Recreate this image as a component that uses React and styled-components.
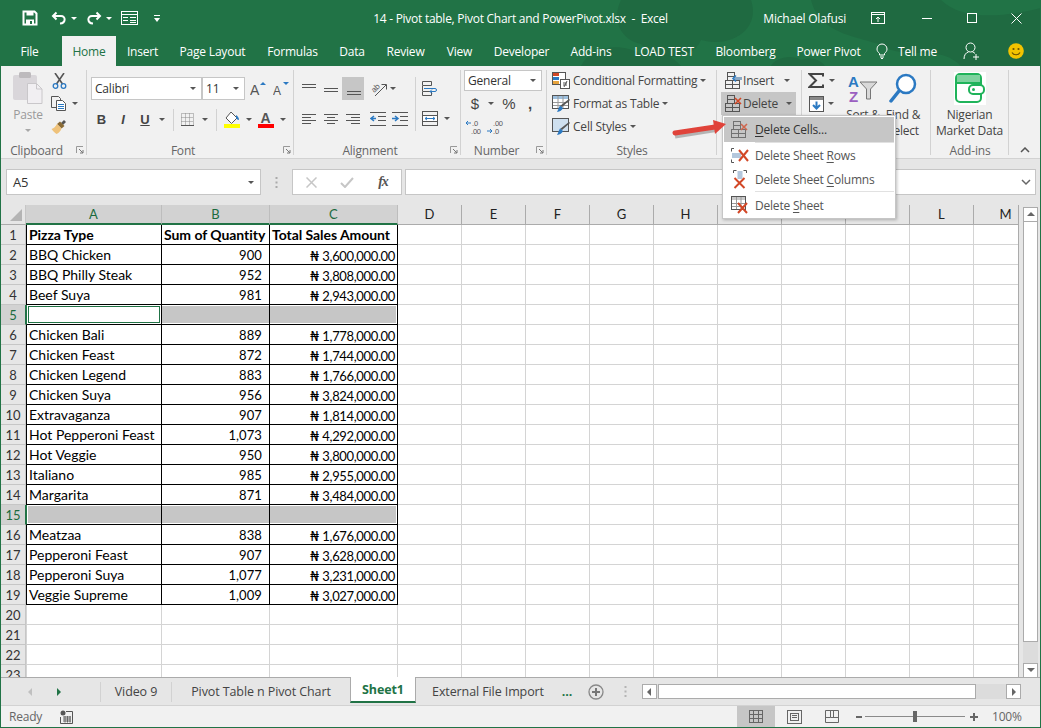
import React from "react";
import styled, { createGlobalStyle } from "styled-components";

const GREEN = "#217346";
const UI = `"Open Sans", "Noto Sans", sans-serif`;
const SHEET = `Lato, "Noto Sans", "DejaVu Sans", sans-serif`;

const Global = createGlobalStyle`
  html, body { margin: 0; padding: 0; background: #fff; }
  * { box-sizing: border-box; }
  svg { display: block; }
`;

const Window = styled.div`
  width: 1041px;
  height: 728px;
  border: 1px solid ${GREEN};
  border-top: 0;
  display: flex;
  flex-direction: column;
  overflow: hidden;
  position: relative;
  font-family: ${UI};
  font-size: 12px;
  letter-spacing: -0.2px;
  color: #444;
`;

/* ---------- title + tabs ---------- */
const Header = styled.header`
  position: relative;
  background: ${GREEN};
  color: #fff;
  height: 66px;
  flex: none;
  margin: 0 -1px;
`;
const Pattern = styled.svg`
  position: absolute;
  top: 0;
  right: 0;
  pointer-events: none;
`;
const TitleBar = styled.div`
  position: relative;
  height: 36px;
  display: grid;
  grid-template-columns: 1fr auto 1fr;
  align-items: center;
`;
const Qat = styled.div`
  display: flex;
  align-items: center;
  padding-left: 20px;
`;
const Slot = styled.div`
  width: ${(p) => p.$w}px;
  height: ${(p) => p.$h || 22}px;
  margin-left: ${(p) => p.$ml || 0}px;
  flex: none;
  display: flex;
  align-items: center;
  justify-content: center;
  background: ${(p) => (p.$on ? "#c6c6c6" : "transparent")};
`;
const Title = styled.div`
  white-space: pre;
  letter-spacing: -0.27px;
`;
const WinControls = styled.div`
  display: flex;
  align-items: center;
  justify-content: flex-end;
  padding-right: 2px;
`;
const UserName = styled.span`
  margin-right: 14px;
`;
const TabRow = styled.nav`
  position: relative;
  height: 30px;
  display: flex;
  align-items: stretch;
`;
const Tab = styled.div`
  width: ${(p) => p.$w}px;
  margin-left: ${(p) => p.$ml || 0}px;
  flex: none;
  display: flex;
  align-items: center;
  justify-content: center;
  white-space: nowrap;
  background: ${(p) => (p.$active ? "#f1f1f1" : "transparent")};
  color: ${(p) => (p.$active ? GREEN : "#fff")};
`;

/* ---------- ribbon ---------- */
const Ribbon = styled.section`
  height: 93px;
  flex: none;
  display: flex;
  background: #f1f1f1;
  border-bottom: 1px solid #d2d2d2;
`;
const Group = styled.div`
  width: ${(p) => p.$w}px;
  flex: none;
  display: flex;
  flex-direction: column;
  position: relative;
  &::after {
    content: "";
    position: absolute;
    right: 0;
    top: 4px;
    bottom: 3px;
    width: 1px;
    background: #d2d2d2;
  }
`;
const Body = styled.div`
  flex: 1;
  display: flex;
  min-height: 0;
  padding: ${(p) => p.$pt ?? 3}px 0 0 ${(p) => p.$pl ?? 0}px;
`;
const GroupLabel = styled.div`
  height: 16px;
  display: flex;
  align-items: center;
  color: #666;
  span { flex: 1; text-align: center; }
`;
const Launcher = styled.div`
  width: 15px;
  flex: none;
  display: flex;
  justify-content: center;
`;
const Col = styled.div`
  display: flex;
  flex-direction: column;
  margin-left: ${(p) => p.$ml || 0}px;
  width: ${(p) => (p.$w ? `${p.$w}px` : "auto")};
`;
const WideRow = styled.div`
  display: flex;
  align-items: center;
  height: ${(p) => p.$h}px;
  margin-bottom: ${(p) => p.$mb || 0}px;
`;
const BigButton = styled.div`
  width: ${(p) => p.$w}px;
  flex: none;
  display: flex;
  flex-direction: column;
  align-items: center;
  margin-left: ${(p) => p.$ml || 0}px;
  padding-top: 3px;
  color: ${(p) => (p.$muted ? "#9a9a9a" : "#444")};
`;
const BigIcon = styled.div`
  height: 32px;
  display: flex;
  align-items: center;
`;
const BigText = styled.div`
  line-height: 16px;
  margin-top: 3px;
  text-align: center;
  white-space: nowrap;
`;
const Caret = styled.i`
  display: block;
  flex: none;
  width: 0;
  height: 0;
  border: 3px solid transparent;
  border-top: 3px solid ${(p) => p.$c || "#555"};
  border-bottom: 0;
  margin: ${(p) => p.$m || "0"};
`;
const Select = styled.div`
  width: ${(p) => p.$w}px;
  height: ${(p) => p.$h || 23}px;
  margin-left: ${(p) => p.$ml || 0}px;
  flex: none;
  background: #fff;
  border: 1px solid #c6c6c6;
  display: flex;
  align-items: center;
  justify-content: space-between;
  padding: 0 5px 0 3px;
  color: #333;
`;
const VLine = styled.div`
  width: 1px;
  height: ${(p) => p.$h || 22}px;
  background: #d2d2d2;
  margin: 0 ${(p) => p.$mr ?? 4}px 0 ${(p) => p.$ml ?? 4}px;
  flex: none;
`;
const StyleRow = styled.div`
  height: 23px;
  display: flex;
  align-items: center;
  white-space: nowrap;
  width: ${(p) => (p.$w ? `${p.$w}px` : "auto")};
  background: ${(p) => (p.$on ? "#c6c6c6" : "transparent")};
  padding-left: ${(p) => p.$pl || 0}px;
`;
const RowText = styled.span`
  margin: 0 ${(p) => p.$mr ?? 3}px 0 ${(p) => p.$ml ?? 3}px;
`;
const Collapse = styled.div`
  flex: 1;
  display: flex;
  align-items: flex-end;
  justify-content: center;
  padding: 0 0 5px 0;
`;

/* ---------- formula bar ---------- */
const FormulaBar = styled.div`
  height: 46px;
  flex: none;
  background: #e6e6e6;
  display: flex;
  align-items: center;
  padding: 0 4px 0 5px;
`;
const NameBox = styled.div`
  width: 255px;
  height: 26px;
  background: #fff;
  border: 1px solid #c6c6c6;
  display: flex;
  align-items: center;
  justify-content: space-between;
  padding: 0 6px;
  font-size: 13px;
  color: #333;
`;
const Grip = styled.div`
  width: 31px;
  display: flex;
  justify-content: center;
`;
const FxBox = styled.div`
  width: 110px;
  height: 26px;
  background: #fff;
  border: 1px solid #c6c6c6;
  display: flex;
  align-items: center;
`;
const FormulaInput = styled.div`
  flex: 1;
  height: 26px;
  margin-left: 3px;
  background: #fff;
  border: 1px solid #c6c6c6;
  display: flex;
  align-items: center;
  justify-content: flex-end;
  padding-right: 4px;
`;

/* ---------- sheet ---------- */
const SheetArea = styled.div`
  height: 473px;
  flex: none;
  display: flex;
  background: #e6e6e6;
  border-bottom: 1px solid #ababab;
`;
const Grid = styled.div`
  width: 1018px;
  flex: none;
  overflow: hidden;
  background: #fff;
  border-right: 1px solid #ababab;
  font-family: ${SHEET};
  font-size: 13px;
  letter-spacing: 0.1px;
  color: #000;
`;
const HeadRow = styled.div`
  display: flex;
  height: 20px;
  background: #e6e6e6;
`;
const Corner = styled.div`
  width: 25px;
  flex: none;
  display: flex;
  align-items: flex-end;
  justify-content: flex-end;
  padding: 0 3px 3px 0;
  border-right: 1px solid #c6c6c6;
  border-bottom: 1px solid #ababab;
`;
const ColHead = styled.div`
  width: ${(p) => p.$w}px;
  flex: none;
  text-align: center;
  line-height: 18px;
  color: ${(p) => (p.$sel ? "#1b6b3e" : "#222")};
  background: ${(p) => (p.$sel ? "#d2d2d2" : "#e6e6e6")};
  border-right: 1px solid ${(p) => (p.$sel ? "#bdbdbd" : "#ababab")};
  border-bottom: ${(p) => (p.$sel ? `2px solid ${GREEN}` : "1px solid #ababab")};
`;
const SheetRow = styled.div`
  display: flex;
  height: 20px;
`;
const RowHead = styled.div`
  width: 25px;
  flex: none;
  text-align: center;
  line-height: 20px;
  letter-spacing: 0;
  color: ${(p) => (p.$sel ? "#1b6b3e" : "#333")};
  background: ${(p) => (p.$sel ? "#d2d2d2" : "#e6e6e6")};
  border-bottom: 1px solid #c6c6c6;
  border-right: 1px solid ${(p) => (p.$sel ? GREEN : "#c6c6c6")};
`;
const Cell = styled.div`
  width: ${(p) => p.$w}px;
  flex: none;
  line-height: 20px;
  white-space: nowrap;
  overflow: hidden;
  font-size: ${(p) => (p.$right ? 13 : 14)}px;
  letter-spacing: ${(p) => (p.$right ? "0.1px" : p.$bold ? "-0.05px" : "0")};
  font-weight: ${(p) => (p.$bold ? 700 : 400)};
  text-align: ${(p) => (p.$right ? "right" : "left")};
  padding: 0 ${(p) => p.$pr ?? 2}px 0 2px;
  border-right: 1px solid ${(p) => (p.$table ? "#000" : "#d4d4d4")};
  border-bottom: 1px solid ${(p) => (p.$table ? "#000" : "#d4d4d4")};
  border-left: ${(p) => (p.$first ? `1px solid ${p.$sel ? GREEN : p.$table ? "#000" : "#d4d4d4"}` : "0")};
  background: ${(p) => (p.$fill ? "#c6c6c6" : "#fff")};
  box-shadow: ${(p) =>
    p.$fill
      ? `inset 0 1px 0 #fff, inset 0 -1px 0 #fff${p.$first ? ", inset 1px 0 0 #fff" : ""}${p.$end ? ", inset -1px 0 0 #fff" : ""}`
      : "none"};
`;
const ActiveCell = styled.div`
  height: 17px;
  margin: 1px -1px 0 -1px;
  border: 1px solid ${GREEN};
  background: #fff;
`;
const Naira = styled.span`
  font-family: "Noto Sans", sans-serif;
  font-size: 15px;
  letter-spacing: 0;
`;
const Amount = styled.span`
  letter-spacing: -0.35px;
`;
const VScroll = styled.div`
  flex: 1;
  display: flex;
  flex-direction: column;
  align-items: center;
  padding: 2px 0 0 2px;
`;
const ScrollBtn = styled.div`
  width: ${(p) => p.$w || 15}px;
  height: ${(p) => p.$h || 15}px;
  margin-left: ${(p) => p.$ml || 0}px;
  flex: none;
  background: #fff;
  border: 1px solid #ababab;
  display: flex;
  align-items: center;
  justify-content: center;
`;
const VThumb = styled.div`
  width: 15px;
  height: 420px;
  margin-bottom: 21px;
  background: #fff;
  border: 1px solid #ababab;
  border-top: 0;
`;
const VTrack = styled.div`
  width: 15px;
  flex: 1;
  display: flex;
  flex-direction: column;
  background: #dcdcdc;
`;

/* ---------- sheet tabs ---------- */
const TabBar = styled.div`
  height: 28px;
  flex: none;
  display: flex;
  align-items: center;
  background: #e6e6e6;
  border-bottom: 1px solid #d2d2d2;
  font-size: 12.5px;
  letter-spacing: -0.1px;
  color: #444;
`;
const SheetTab = styled.div`
  width: ${(p) => p.$w}px;
  height: ${(p) => (p.$active ? 26 : 20)}px;
  flex: none;
  display: flex;
  align-items: center;
  justify-content: center;
  white-space: nowrap;
  align-self: ${(p) => (p.$active ? "flex-start" : "center")};
  ${(p) =>
    p.$active &&
    `
    margin-top: -1px;
    background: #fff;
    color: ${GREEN};
    font-weight: 700;
    border: 1px solid #ababab;
    border-top: 0;
    border-bottom: 2px solid ${GREEN};
  `}
`;
const Dots = styled.div`
  width: 14px;
  flex: none;
  font-weight: 700;
  color: ${GREEN};
  text-align: center;
  line-height: 14px;
`;
const HScroll = styled.div`
  width: 379px;
  margin-left: ${(p) => p.$ml}px;
  height: 15px;
  flex: none;
  display: flex;
  background: #dcdcdc;
`;
const HThumb = styled.div`
  width: 319px;
  background: #fff;
  border: 1px solid #ababab;
  margin-left: 1px;
`;

/* ---------- status bar ---------- */
const StatusBar = styled.footer`
  flex: 1;
  display: flex;
  align-items: stretch;
  background: #f1f1f1;
  color: #666;
`;
const Ready = styled.div`
  padding-left: 8px;
  width: 59px;
  display: flex;
  align-items: center;
`;
const SliderTrack = styled.div`
  width: 100px;
  height: 1px;
  background: #8a8a8a;
  position: relative;
  margin-left: 2px;
  align-self: center;
`;
const SliderKnob = styled.div`
  position: absolute;
  left: 48px;
  top: -5px;
  width: 4px;
  height: 11px;
  background: #666;
`;
const Percent = styled.div`
  display: flex;
  align-items: center;
  margin-left: 14px;
`;

/* ---------- dropdown ---------- */
const Menu = styled.div`
  position: absolute;
  left: 721px;
  top: 115px;
  width: 174px;
  height: 104px;
  background: #fff;
  border: 1px solid #c6c6c6;
  box-shadow: 1px 1px 3px rgba(0, 0, 0, 0.25);
  padding: 1px;
  display: flex;
  flex-direction: column;
  z-index: 4;
`;
const MenuItem = styled.div`
  height: ${(p) => p.$h}px;
  display: flex;
  align-items: center;
  flex: none;
  color: ${(p) => (p.$on ? "#333" : "#555")};
  background: ${(p) => (p.$on ? "#c6c6c6" : "transparent")};
  u { text-underline-offset: 2px; }
`;
const MenuIcon = styled.div`
  width: 31px;
  flex: none;
  display: flex;
  justify-content: center;
`;
const MenuSep = styled.div`
  height: 1px;
  flex: none;
  margin-left: 31px;
  background: #e1e1e1;
`;
const Arrow = styled.svg`
  position: absolute;
  left: 668px;
  top: 117px;
  z-index: 5;
`;

/* ---------- icons ---------- */
const Svg = ({ w = 16, h = 16, children, ...rest }) => (
  <svg width={w} height={h} viewBox={`0 0 ${w} ${h}`} fill="none" {...rest}>
    {children}
  </svg>
);
const GRAY = "#555";
const BLUE = "#2b79c2";
const RED = "#d24726";

const SaveIcon = () => (
  <Svg w={16} h={16}>
    <path d="M1.5 1.5h11l2 2v11h-13z" stroke="#fff" strokeWidth="2" />
    <rect x="4.5" y="1" width="7" height="4.5" fill="#fff" />
    <rect x="4" y="9.5" width="8" height="5" fill="#fff" />
    <rect x="8" y="11" width="2" height="3" fill={GREEN} />
  </Svg>
);
const UndoIcon = ({ flip }) => (
  <Svg w={16} h={14} style={flip ? { transform: "scaleX(-1)" } : undefined}>
    <path d="M5.5 1.5 2 5l3.5 3.5" stroke="#fff" strokeWidth="2" />
    <path d="M2.5 5H10c5 0 5 7-1 7.5" stroke="#fff" strokeWidth="2" />
  </Svg>
);
const FormIcon = () => (
  <Svg w={17} h={14}>
    <rect x="0.5" y="0.5" width="16" height="13" stroke="#fff" />
    <path d="M1 3.5h15M2 6.5h5M9 6.5h6M2 9.5h5M9 9.5h6M9 11.5h6" stroke="#fff" />
  </Svg>
);
const CustomizeIcon = () => (
  <Svg w={8} h={9}>
    <path d="M1 1.5h6" stroke="#fff" />
    <path d="M1 4h6L4 8z" fill="#fff" />
  </Svg>
);
const RibbonDisplayIcon = () => (
  <Svg w={14} h={12}>
    <rect x="0.5" y="0.5" width="13" height="11" stroke="#fff" />
    <path d="M1 2.5h12M7 10V5M5 7l2-2 2 2" stroke="#fff" />
  </Svg>
);
const MinIcon = () => (
  <Svg w={10} h={10}><path d="M0 5.5h10" stroke="#fff" /></Svg>
);
const MaxIcon = () => (
  <Svg w={10} h={10}><rect x="0.5" y="0.5" width="9" height="9" stroke="#fff" /></Svg>
);
const CloseIcon = () => (
  <Svg w={11} h={11}><path d="M.5.5l10 10M10.5.5l-10 10" stroke="#fff" /></Svg>
);
const BulbIcon = () => (
  <Svg w={12} h={16}>
    <path d="M3.5 10.5C2 9 1 8 1 6a5 5 0 0 1 10 0c0 2-1 3-2.5 4.5v1.5h-5z" stroke="#fff" />
    <path d="M4 14h4M5 15.5h2" stroke="#fff" />
  </Svg>
);
const PersonPlusIcon = () => (
  <Svg w={17} h={18}>
    <circle cx="7.5" cy="5.5" r="4.5" stroke="#fff" />
    <path d="M1 17c0-4 2-6.5 4.5-7M9.5 10c1 .2 2 .7 2.5 1.5" stroke="#fff" />
    <path d="M13 12v6M10 15h6" stroke="#fff" />
  </Svg>
);
const SmileIcon = () => (
  <Svg w={16} h={16}>
    <circle cx="8" cy="8" r="7.8" fill="#f3c300" />
    <circle cx="5.5" cy="6" r="1.1" fill="#6b5200" />
    <circle cx="10.5" cy="6" r="1.1" fill="#6b5200" />
    <path d="M4 9.5c1.5 3 6.5 3 8 0" stroke="#6b5200" strokeWidth="1.2" />
  </Svg>
);
const PasteIcon = () => (
  <Svg w={30} h={32}>
    <rect x="0" y="3" width="24" height="25" rx="2" fill="#d9d6da" />
    <rect x="6" y="0" width="12" height="6" rx="1.5" fill="#bdbabd" />
    <path d="M14.5 11.5h9l5.5 5.5v14.5H14.5z" fill="#f1eff2" stroke="#c9c7ca" />
    <path d="M23.5 11.5V17H29" stroke="#c9c7ca" />
  </Svg>
);
const ScissorsIcon = () => (
  <Svg w={15} h={16}>
    <path d="M3 0l7.5 11M12 0 4.5 11" stroke={GRAY} strokeWidth="1.6" />
    <circle cx="3.5" cy="13" r="2.3" stroke={BLUE} strokeWidth="1.3" />
    <circle cx="11.5" cy="13" r="2.3" stroke={BLUE} strokeWidth="1.3" />
  </Svg>
);
const CopyIcon = () => (
  <Svg w={16} h={15}>
    <path d="M.5.5h7l2 2v9H.5z" fill="#f1f1f1" stroke={GRAY} />
    <path d="M5.5 4.5h6l3 3v7h-9z" fill="#fff" stroke={GRAY} />
    <path d="M7 8.5h6M7 10.5h6M7 12.5h6" stroke={BLUE} />
  </Svg>
);
const PainterIcon = () => (
  <Svg w={16} h={15}>
    <path d="M10 4l3-3 2 2-3 3z" fill="#555" />
    <path d="M9 2.5l4.5 4.5-3 2.5L6 5z" fill="#8a6b35" />
    <path d="M6 5l4.5 4.5c-1 3-3 4.5-5 5.5-1.5-1-4-3.5-5-5 2.5-.5 4-2.5 5.5-5z" fill="#efc27a" />
  </Svg>
);
const FontSizeIcon = ({ big }) => (
  <Svg w={16} h={16}>
    <text x="0" y="14" fontFamily="Liberation Sans" fontSize={big ? 14 : 12} fill={GRAY}>A</text>
    <path d={big ? "M10 4l3-3 3 3z" : "M10 1l3 3 3-3z"} fill={BLUE} />
  </Svg>
);
const BordersIcon = () => (
  <Svg w={14} h={14}>
    <rect x="0.5" y="0.5" width="12" height="12" stroke="#888" strokeDasharray="1 1" />
    <path d="M.5 4.5h12M.5 8.5h12M4.5.5v12M8.5.5v12" stroke="#888" strokeDasharray="1 1" />
    <path d="M0 12.5h13" stroke={GRAY} />
  </Svg>
);
const FillIcon = () => (
  <Svg w={16} h={17}>
    <path d="M7 1l6 6-5.5 5.5L2 7z" fill="#fff" stroke={GRAY} />
    <path d="M12 4c2 1 3 3 3 5-1.500 0-2-1-3-2z" fill={BLUE} />
    <rect x="0" y="13" width="16" height="4" fill="#ffff00" />
  </Svg>
);
const FontColorIcon = () => (
  <Svg w={16} h={17}>
    <text x="2.500" y="12" fontFamily="Liberation Sans" fontWeight="700" fontSize="14" fill={GRAY}>A</text>
    <rect x="0" y="13" width="16" height="4" fill="#ff0000" />
  </Svg>
);
const Lines = ({ rows, w = 15 }) => (
  <Svg w={w} h={14}>
    {rows.map(([x1, x2, y], i) => (
      <path key={i} d={`M${x1} ${y}.5H${x2}`} stroke={GRAY} />
    ))}
  </Svg>
);
const OrientationIcon = () => (
  <Svg w={18} h={17}>
    <text x="1" y="11" fontFamily="Liberation Sans" fontSize="8" fill={GRAY} transform="rotate(-45 5 8)">ab</text>
    <path d="M5 16 16 5M11.500 4.500H16.500V9.500" stroke={GRAY} />
  </Svg>
);
const WrapIcon = () => (
  <Svg w={16} h={16}>
    <path d="M.5 .5h9v4h-9zM.5 10.500h9v4h-9z" stroke={GRAY} />
    <path d="M2 7.500h11a1.500 1.500 0 0 1 0 3H8" stroke={BLUE} />
    <path d="M10 8.500l-2 2 2 2" stroke={BLUE} />
    <path d="M.5 5v5" stroke={GRAY} />
  </Svg>
);
const MergeIcon = () => (
  <Svg w={16} h={15}>
    <rect x="0.500" y="0.500" width="15" height="14" stroke={GRAY} />
    <path d="M1 4.500h14M1 10.500h14" stroke={GRAY} />
    <rect x="1" y="5" width="14" height="5" fill="#fff" />
    <path d="M3 7.500h10M3 7.500l2-1.500M3 7.500l2 1.500M13 7.500l-2-1.500M13 7.500l-2 1.500" stroke={BLUE} />
  </Svg>
);
const IndentIcon = ({ right }) => (
  <Svg w={16} h={14}>
    <path d="M0 .5h16M8 4.500h8M8 8.500h8M0 13.500h16" stroke={GRAY} />
    <path
      d={right ? "M0 6.500h5M3 4l3 2.500L3 9" : "M6 6.500H1M4 4 1 6.500 4 9"}
      stroke={BLUE}
      strokeWidth="1.500"
    />
  </Svg>
);
const DecimalIcon = ({ more }) => (
  <Svg w={18} h={16}>
    <text x={more ? 6 : 7} y="7" fontFamily="Liberation Sans" fontSize="7.500" fill={GRAY}>{more ? ".00" : ".0"}</text>
    <text x="6" y="15" fontFamily="Liberation Sans" fontSize="7.500" fill={GRAY}>{more ? ".0" : ".00"}</text>
    <path d={more ? "M0 12h5M3 10l2 2-2 2" : "M6 4H1M3 2 1 4l2 2"} stroke={BLUE} />
  </Svg>
);
const CondFormatIcon = () => (
  <Svg w={18} h={17}>
    <rect x="0.500" y="0.500" width="13" height="12" fill="#fff" stroke={GRAY} />
    <rect x="1" y="1" width="6" height="3" fill={RED} />
    <rect x="1" y="5" width="6" height="3" fill={BLUE} />
    <rect x="1" y="9" width="6" height="3" fill="#e7a33c" />
    <rect x="8.500" y="7.500" width="9" height="9" fill="#fff" stroke={GRAY} />
    <path d="M11 11h4M11 13h4M12 15l3-6" stroke={GRAY} />
  </Svg>
);
const TableBrushIcon = ({ plain }) => (
  <Svg w={18} h={17}>
    <rect x="0.500" y="0.500" width="16" height="13" fill={plain ? "#cfe0ef" : "#fff"} stroke={GRAY} />
    {!plain && <rect x="1" y="1" width="15" height="3" fill="#9dbfdd" />}
    {!plain && <path d="M1 7.500h15M1 10.500h15M6 1v12M11 1v12" stroke="#9a9a9a" />}
    <path d="M17 4l1 1-8 7-2-1z" fill={GRAY} />
    <path d="M8 10.500l3 2.500c-1 2.500-3 3.500-6 4 .8-1 1-3 3-6.500z" fill={BLUE} />
  </Svg>
);
const Cells3 = ({ c = GRAY }) => (
  <>
    <rect x="2.500" y="0.500" width="7" height="4" stroke={c} />
    <rect x="2.500" y="4.500" width="7" height="4" stroke={c} />
    <rect x="0.500" y="8.500" width="7" height="4" stroke={c} />
    <rect x="7.500" y="8.500" width="7" height="4" stroke={c} />
    <rect x="0.500" y="12.500" width="7" height="4" stroke={c} />
    <rect x="7.500" y="12.500" width="7" height="4" stroke={c} />
  </>
);
const InsertCellsIcon = () => (
  <Svg w={18} h={17}>
    <Cells3 />
    <path d="M9 6.500h8" stroke="#8aa8c4" strokeWidth="3" />
    <path d="M11 3.500 8 6.500l3 3" stroke={BLUE} strokeWidth="1.500" />
  </Svg>
);
const DeleteCellsIcon = ({ faded }) => (
  <Svg w={18} h={17} opacity={faded ? 0.75 : 1}>
    <Cells3 />
    <path d="M10 3l6 6M16 3l-6 6" stroke={RED} strokeWidth="1.600" />
  </Svg>
);
const DeleteRowsIcon = () => (
  <Svg w={18} h={17}>
    <path d="M3 1.500H.5v3M3 15.500H.500v-3" stroke={GRAY} />
    <rect x="1" y="6" width="9" height="5" fill="#b4c7dc" />
    <path d="M8 3l9 11M17 3 8 14" stroke={RED} strokeWidth="2" />
  </Svg>
);
const DeleteColsIcon = () => (
  <Svg w={16} h={19}>
    <path d="M1.500 3V.500h3M11.500 .500h3V3" stroke={GRAY} />
    <rect x="5.500" y="1" width="5" height="8" fill="#b4c7dc" />
    <path d="M2.500 8l10 10M12.500 8l-10 10" stroke={RED} strokeWidth="2" />
  </Svg>
);
const DeleteSheetIcon = () => (
  <Svg w={18} h={18}>
    <rect x="0.500" y="0.500" width="14" height="13" fill="#fff" stroke={GRAY} />
    <rect x="1" y="1" width="13" height="3" fill="#c9c9c9" />
    <path d="M1 7.500h13M1 10.500h13M5.500 1v12M10 1v12" stroke="#9a9a9a" />
    <path d="M7 7l9 10M16 7 7 17" stroke={RED} strokeWidth="2" />
  </Svg>
);
const SigmaIcon = () => (
  <Svg w={16} h={15}>
    <path d="M15 3.500V1H1.500L8 7.500 1.500 14H15v-2.500" stroke="#444" strokeWidth="2" />
  </Svg>
);
const FillDownIcon = () => (
  <Svg w={15} h={16}>
    <rect x="0.500" y="0.500" width="14" height="15" fill="#fff" stroke={GRAY} />
    <rect x="1" y="1" width="13" height="3" fill="#888" />
    <path d="M7.500 5.500v7M4 9l3.500 3.500L11 9" stroke={BLUE} strokeWidth="2" />
  </Svg>
);
const SortIcon = () => (
  <Svg w={30} h={30}>
    <text x="0" y="14" fontFamily="Liberation Sans" fontWeight="700" fontSize="15" fill={BLUE}>A</text>
    <text x="1" y="29" fontFamily="Liberation Sans" fontWeight="700" fontSize="15" fill="#9b5fc0">Z</text>
    <path d="M12 9h17l-6.500 7v10h-4V16z" fill="#d9d9d9" stroke="#777" />
  </Svg>
);
const FindIcon = () => (
  <Svg w={28} h={30}>
    <circle cx="17" cy="11" r="9" fill="#fff" stroke={BLUE} strokeWidth="2.500" />
    <path d="M10 18 2 28" stroke={BLUE} strokeWidth="3.500" strokeLinecap="round" />
  </Svg>
);
const WalletIcon = () => (
  <Svg w={32} h={33}>
    <rect width="32" height="33" fill="#fff" />
    <rect x="2" y="2" width="25" height="28" rx="4" stroke="#1fb35a" strokeWidth="2" />
    <rect x="3" y="3" width="23" height="7" fill="#7fd29f" />
    <path d="M3 11h24" stroke="#1fb35a" strokeWidth="2" />
    <rect x="15" y="13" width="15" height="9" rx="4" fill="#fff" stroke="#1fb35a" strokeWidth="2" />
    <circle cx="19.500" cy="17.500" r="1.500" fill="#1fb35a" />
  </Svg>
);
const ChevronUp = () => (
  <Svg w={10} h={6}><path d="M1 5l4-4 4 4" stroke="#555" strokeWidth="1.500" /></Svg>
);
const LaunchIcon = () => (
  <Svg w={8} h={8}>
    <path d="M.5 7V.5h6.500" stroke="#999" />
    <path d="M3 3l4 4M7 4v3H4" stroke="#777" />
  </Svg>
);
const Triangle = ({ dir, c = "#666" }) => {
  const d = {
    up: "M0 5l4-4 4 4z",
    down: "M0 1l4 4 4-4z",
    left: "M5 0 1 4l4 4z",
    right: "M2 0l4 4-4 4z",
  }[dir];
  return <Svg w={8} h={8}><path d={d} fill={c} /></Svg>;
};
const MacroIcon = () => (
  <Svg w={13} h={14}>
    <circle cx="3" cy="3" r="2.500" fill="#555" />
    <path d="M6 1.500h6.500v12H.5V7" stroke="#555" />
    <path d="M3 7h8M3 9h8M3 11h8M5 6v6.500M7.500 6v6.500M10 6v6.500" stroke="#666" />
  </Svg>
);
const NormalIcon = () => (
  <Svg w={14} h={13}>
    <rect x="0.500" y="0.500" width="13" height="12" stroke="#666" />
    <path d="M.5 4.500h13M.5 8.500h13M4.500.5v12M9.500.5v12" stroke="#666" />
  </Svg>
);
const PageIcon = () => (
  <Svg w={15} h={14}>
    <rect x="0.500" y="0.500" width="14" height="13" stroke="#666" />
    <rect x="3.500" y="3.500" width="8" height="7" stroke="#666" />
    <path d="M5 5.500h5M5 7.500h5" stroke="#666" />
  </Svg>
);
const BreakIcon = () => (
  <Svg w={14} h={13}>
    <path d="M.5 .5h13v12H.5zM5.500 .5v7H.5M5.500 7.500h8M8.500 .5v7" stroke="#666" />
  </Svg>
);
const FxText = styled.span`
  font-family: "Liberation Serif", serif;
  font-style: italic;
  font-weight: 700;
  font-size: 14px;
  color: #555;
  letter-spacing: -1px;
`;
const FakeGlyph = styled.span`
  font-family: "Liberation Sans", sans-serif;
  font-size: ${(p) => p.$s || 13}px;
  font-weight: ${(p) => p.$wt || 400};
  font-style: ${(p) => (p.$it ? "italic" : "normal")};
  text-decoration: ${(p) => (p.$u ? "underline" : "none")};
  color: #444;
  letter-spacing: 0;
`;

/* ---------- data ---------- */
const widths = [136, 108, 128, 64, 64, 64, 64, 64, 64, 64, 64, 64, 64];
const letters = "ABCDEFGHIJKLM".split("");
const sales = [
  ["BBQ Chicken", "900", "3,600,000.00"],
  ["BBQ Philly Steak", "952", "3,808,000.00"],
  ["Beef Suya", "981", "2,943,000.00"],
  null,
  ["Chicken Bali", "889", "1,778,000.00"],
  ["Chicken Feast", "872", "1,744,000.00"],
  ["Chicken Legend", "883", "1,766,000.00"],
  ["Chicken Suya", "956", "3,824,000.00"],
  ["Extravaganza", "907", "1,814,000.00"],
  ["Hot Pepperoni Feast", "1,073", "4,292,000.00"],
  ["Hot Veggie", "950", "3,800,000.00"],
  ["Italiano", "985", "2,955,000.00"],
  ["Margarita", "871", "3,484,000.00"],
  null,
  ["Meatzaa", "838", "1,676,000.00"],
  ["Pepperoni Feast", "907", "3,628,000.00"],
  ["Pepperoni Suya", "1,077", "3,231,000.00"],
  ["Veggie Supreme", "1,009", "3,027,000.00"],
];
const tabs = [
  ["Insert", 53], ["Page Layout", 87], ["Formulas", 73], ["Data", 46], ["Review", 61], ["View", 47],
  ["Developer", 77], ["Add-ins", 62], ["LOAD TEST", 84], ["Bloomberg", 79], ["Power Pivot", 87],
];

const EmptyCols = () => widths.slice(3).map((w, i) => <Cell key={i} $w={w} />);

const TableRow = ({ n, data }) => {
  const sel = !data;
  const active = n === 5;
  return (
    <SheetRow>
      <RowHead $sel={sel}>{n}</RowHead>
      <Cell $w={widths[0]} $table $first $sel={sel} $fill={sel && !active}>
        {active && <ActiveCell />}
        {data && data[0]}
      </Cell>
      <Cell $w={widths[1]} $table $right $pr={7} $fill={sel}>{data && data[1]}</Cell>
      <Cell $w={widths[2]} $table $right $fill={sel} $end={sel}>
        {data && <><Naira>₦</Naira> <Amount>{data[2]}</Amount></>}
      </Cell>
      <EmptyCols />
    </SheetRow>
  );
};

export default function App() {
  return (
    <>
      <Global />
      <Window>
        <Header>
          <Pattern width="460" height="66" viewBox="0 0 460 66" fill="#1f6a41">
            <path d="M40 0h130c10 30-20 48-50 40-10 24-50 20-60 4C40 40 30 20 40 0z" />
            <path d="M230 0h130c20 20 60 18 100 8v58H380c-20-20-40-8-70-16-20-14-70-10-80-50z" />
            <path d="M0 66c10-20 40-24 60-12 14-6 30 0 40 12z" />
            <path d="M190 66c4-8 20-12 30-6 10-4 20 0 24 6z" />
          </Pattern>
          <TitleBar>
            <Qat>
              <Slot $w={20}><SaveIcon /></Slot>
              <Slot $w={22} $ml={8}><UndoIcon /></Slot>
              <Slot $w={8}><Caret $c="#fff" /></Slot>
              <Slot $w={22} $ml={5}><UndoIcon flip /></Slot>
              <Slot $w={8}><Caret $c="#fff" /></Slot>
              <Slot $w={24} $ml={4}><FormIcon /></Slot>
              <Slot $w={10} $ml={11}><CustomizeIcon /></Slot>
            </Qat>
            <Title>14 - Pivot table, Pivot Chart and PowerPivot.xlsx  -  Excel</Title>
            <WinControls>
              <UserName>Michael Olafusi</UserName>
              <Slot $w={36}><RibbonDisplayIcon /></Slot>
              <Slot $w={45} $ml={8}><MinIcon /></Slot>
              <Slot $w={45}><MaxIcon /></Slot>
              <Slot $w={45}><CloseIcon /></Slot>
            </WinControls>
          </TitleBar>
          <TabRow>
            <Tab $w={59}>File</Tab>
            <Tab $w={54} $ml={3} $active>Home</Tab>
            {tabs.map(([t, w]) => (
              <Tab key={t} $w={w}>{t}</Tab>
            ))}
            <Slot $w={12} $h={30} $ml={4}><BulbIcon /></Slot>
            <Tab $w={39} $ml={10}>Tell me</Tab>
            <Slot $w={18} $h={30} $ml={25}><PersonPlusIcon /></Slot>
            <Slot $w={16} $h={30} $ml={28}><SmileIcon /></Slot>
          </TabRow>
        </Header>

        <Ribbon>
          <Group $w={86}>
            <Body $pl={12}>
              <BigButton $w={30} $muted>
                <BigIcon><PasteIcon /></BigIcon>
                <BigText>Paste</BigText>
                <Caret $c="#a8a8a8" $m="6px 0 0" />
              </BigButton>
              <Col $ml={6}>
                <Slot $w={20} $h={23}><ScissorsIcon /></Slot>
                <WideRow $h={23}>
                  <Slot $w={20} $h={23}><CopyIcon /></Slot>
                  <Caret $m="0 0 0 3px" />
                </WideRow>
                <Slot $w={20} $h={23}><PainterIcon /></Slot>
              </Col>
            </Body>
            <GroupLabel><span>Clipboard</span><Launcher><LaunchIcon /></Launcher></GroupLabel>
          </Group>

          <Group $w={207}>
            <Body $pl={4} $pt={11}>
              <Col>
                <WideRow $h={23} $mb={8}>
                  <Select $w={111}>Calibri<Caret /></Select>
                  <Select $w={43}>11<Caret /></Select>
                  <Slot $w={23} $ml={1}><FontSizeIcon big /></Slot>
                  <Slot $w={23}><FontSizeIcon /></Slot>
                </WideRow>
                <WideRow $h={23}>
                  <Slot $w={21}><FakeGlyph $wt={700}>B</FakeGlyph></Slot>
                  <Slot $w={22}><FakeGlyph $it $wt={700}>I</FakeGlyph></Slot>
                  <Slot $w={22}><FakeGlyph $u $wt={700}>U</FakeGlyph></Slot>
                  <Slot $w={12}><Caret /></Slot>
                  <VLine $ml={5} $mr={4} />
                  <Slot $w={20}><BordersIcon /></Slot>
                  <Slot $w={14}><Caret /></Slot>
                  <VLine $ml={4} $mr={3} />
                  <Slot $w={23}><FillIcon /></Slot>
                  <Slot $w={11}><Caret /></Slot>
                  <Slot $w={23}><FontColorIcon /></Slot>
                  <Slot $w={11}><Caret /></Slot>
                </WideRow>
              </Col>
            </Body>
            <GroupLabel><span>Font</span><Launcher><LaunchIcon /></Launcher></GroupLabel>
          </Group>

          <Group $w={167}>
            <Body $pl={4} $pt={11}>
              <Col>
                <WideRow $h={23} $mb={7}>
                  <Slot $w={22} $h={23}><Lines rows={[[0, 14, 2], [0, 14, 5]]} /></Slot>
                  <Slot $w={22} $h={23}><Lines rows={[[0, 14, 6], [0, 14, 9]]} /></Slot>
                  <Slot $w={22} $h={23} $on><Lines rows={[[1, 15, 9], [1, 15, 12]]} /></Slot>
                  <Slot $w={22} $ml={4}><OrientationIcon /></Slot>
                  <Slot $w={6}><Caret /></Slot>
                </WideRow>
                <WideRow $h={23}>
                  <Slot $w={22}><Lines rows={[[0, 14, 2], [0, 9, 5], [0, 14, 8], [0, 9, 11]]} /></Slot>
                  <Slot $w={22}><Lines rows={[[0, 14, 2], [3, 11, 5], [0, 14, 8], [3, 11, 11]]} /></Slot>
                  <Slot $w={22}><Lines rows={[[0, 14, 2], [5, 14, 5], [0, 14, 8], [5, 14, 11]]} /></Slot>
                  <Slot $w={22} $ml={3}><IndentIcon /></Slot>
                  <Slot $w={22}><IndentIcon right /></Slot>
                </WideRow>
              </Col>
              <VLine $h={54} $ml={4} $mr={3} />
              <Col>
                <WideRow $h={23} $mb={7}>
                  <Slot $w={22}><WrapIcon /></Slot>
                </WideRow>
                <WideRow $h={23}>
                  <Slot $w={22}><MergeIcon /></Slot>
                  <Slot $w={12}><Caret /></Slot>
                </WideRow>
              </Col>
            </Body>
            <GroupLabel><span>Alignment</span><Launcher><LaunchIcon /></Launcher></GroupLabel>
          </Group>

          <Group $w={86}>
            <Body $pl={3}>
              <Col>
                <WideRow $h={23}>
                  <Select $w={78} $h={21}>General<Caret /></Select>
                </WideRow>
                <WideRow $h={23}>
                  <Slot $w={22}><FakeGlyph $s={15}>$</FakeGlyph></Slot>
                  <Slot $w={10}><Caret /></Slot>
                  <Slot $w={22} $ml={2}><FakeGlyph $s={15}>%</FakeGlyph></Slot>
                  <Slot $w={20}><FakeGlyph $s={15} $wt={700}>,</FakeGlyph></Slot>
                </WideRow>
                <WideRow $h={23}>
                  <Slot $w={20}><DecimalIcon /></Slot>
                  <Slot $w={20} $ml={2}><DecimalIcon more /></Slot>
                </WideRow>
              </Col>
            </Body>
            <GroupLabel><span>Number</span><Launcher><LaunchIcon /></Launcher></GroupLabel>
          </Group>

          <Group $w={170}>
            <Body $pl={5}>
              <Col>
                <StyleRow><CondFormatIcon /><RowText>Conditional Formatting</RowText><Caret /></StyleRow>
                <StyleRow><TableBrushIcon /><RowText>Format as Table</RowText><Caret /></StyleRow>
                <StyleRow><TableBrushIcon plain /><RowText>Cell Styles</RowText><Caret /></StyleRow>
              </Col>
            </Body>
            <GroupLabel><span>Styles</span></GroupLabel>
          </Group>

          <Group $w={85}>
            <Body $pl={4}>
              <Col>
                <StyleRow $pl={4} $w={75}><InsertCellsIcon /><RowText $ml={0} $mr={0}>Insert</RowText><Caret $m="0 0 0 10px" /></StyleRow>
                <StyleRow $pl={4} $w={75} $on><DeleteCellsIcon /><RowText $ml={0} $mr={0}>Delete</RowText><Caret $m="0 0 0 8px" /></StyleRow>
              </Col>
            </Body>
            <GroupLabel><span>Cells</span></GroupLabel>
          </Group>

          <Group $w={129}>
            <Body $pl={6}>
              <Col>
                <WideRow $h={23}>
                  <Slot $w={16}><SigmaIcon /></Slot>
                  <Caret $m="0 0 0 5px" />
                </WideRow>
                <WideRow $h={23}>
                  <Slot $w={16}><FillDownIcon /></Slot>
                  <Caret $m="0 0 0 4px" />
                </WideRow>
              </Col>
              <BigButton $w={32} $ml={12}>
                <BigIcon><SortIcon /></BigIcon>
                <BigText>Sort &amp;<br />Filter</BigText>
              </BigButton>
              <BigButton $w={40} $ml={4}>
                <BigIcon><FindIcon /></BigIcon>
                <BigText>Find &amp;<br />Select</BigText>
              </BigButton>
            </Body>
            <GroupLabel><span>Editing</span></GroupLabel>
          </Group>

          <Group $w={78}>
            <Body>
              <BigButton $w={77}>
                <BigIcon><WalletIcon /></BigIcon>
                <BigText>Nigerian<br />Market Data</BigText>
              </BigButton>
            </Body>
            <GroupLabel><span>Add-ins</span></GroupLabel>
          </Group>
          <Collapse><ChevronUp /></Collapse>
        </Ribbon>

        <FormulaBar>
          <NameBox>A5<Caret /></NameBox>
          <Grip>
            <Svg w={3} h={11}><path d="M1.500 0v2M1.500 4.500v2M1.500 9v2" stroke="#aaa" strokeWidth="2" /></Svg>
          </Grip>
          <FxBox>
            <Slot $w={36}><Svg w={11} h={11}><path d="M.5.5l10 10M10.500.5l-10 10" stroke="#c6c6c6" strokeWidth="1.500" /></Svg></Slot>
            <Slot $w={36}><Svg w={14} h={11}><path d="M1 6l4 4 8-9" stroke="#c6c6c6" strokeWidth="2" /></Svg></Slot>
            <Slot $w={36}><FxText>fx</FxText></Slot>
          </FxBox>
          <FormulaInput><Svg w={10} h={7}><path d="M1 1l4 4 4-4" stroke="#666" strokeWidth="1.500" /></Svg></FormulaInput>
        </FormulaBar>

        <SheetArea>
          <Grid>
            <HeadRow>
              <Corner><Svg w={12} h={12}><path d="M12 0v12H0z" fill="#b4b4b4" /></Svg></Corner>
              {letters.map((l, i) => (
                <ColHead key={l} $w={widths[i]} $sel={i < 3}>{l}</ColHead>
              ))}
            </HeadRow>
            <SheetRow>
              <RowHead>1</RowHead>
              <Cell $w={widths[0]} $table $first $bold>Pizza Type</Cell>
              <Cell $w={widths[1]} $table $bold>Sum of Quantity</Cell>
              <Cell $w={widths[2]} $table $bold>Total Sales Amount</Cell>
              <EmptyCols />
            </SheetRow>
            {sales.map((data, i) => (
              <TableRow key={i} n={i + 2} data={data} />
            ))}
            {[20, 21, 22, 23].map((n) => (
              <SheetRow key={n}>
                <RowHead>{n}</RowHead>
                <Cell $w={widths[0]} $first />
                <Cell $w={widths[1]} />
                <Cell $w={widths[2]} />
                <EmptyCols />
              </SheetRow>
            ))}
          </Grid>
          <VScroll>
            <ScrollBtn><Triangle dir="up" /></ScrollBtn>
            <VTrack>
              <VThumb />
              <ScrollBtn><Triangle dir="down" /></ScrollBtn>
            </VTrack>
          </VScroll>
        </SheetArea>

        <TabBar>
          <Slot $w={12} $ml={24}><Triangle dir="left" c="#c0c0c0" /></Slot>
          <Slot $w={12} $ml={16}><Triangle dir="right" c={GREEN} /></Slot>
          <VLine $h={20} $ml={35} $mr={0} />
          <SheetTab $w={70}>Video 9</SheetTab>
          <VLine $h={20} $ml={0} $mr={0} />
          <SheetTab $w={178}>Pivot Table n Pivot Chart</SheetTab>
          <SheetTab $w={66} $active>Sheet1</SheetTab>
          <SheetTab $w={144}>External File Import</SheetTab>
          <Dots>...</Dots>
          <Slot $w={16} $ml={14}>
            <Svg w={16} h={16}>
              <circle cx="8" cy="8" r="7" stroke="#888" strokeWidth="1.300" />
              <path d="M8 4v8M4 8h8" stroke="#777" strokeWidth="2" />
            </Svg>
          </Slot>
          <Slot $w={4} $ml={19}>
            <Svg w={3} h={11}><path d="M1.500 0v2M1.500 4.500v2M1.500 9v2" stroke="#b4b4b4" strokeWidth="2" /></Svg>
          </Slot>
          <HScroll $ml={15}>
            <ScrollBtn><Triangle dir="left" /></ScrollBtn>
            <HThumb />
            <ScrollBtn $ml={30}><Triangle dir="right" /></ScrollBtn>
          </HScroll>
        </TabBar>

        <StatusBar>
          <Ready>Ready</Ready>
          <Slot $w={13} $h={21}><MacroIcon /></Slot>
          <Slot $w={38} $h={21} $ml={664} $on><NormalIcon /></Slot>
          <Slot $w={38} $h={21}><PageIcon /></Slot>
          <Slot $w={38} $h={21}><BreakIcon /></Slot>
          <Slot $w={8} $h={21} $ml={4}><Svg w={6} h={2}><path d="M0 1h6" stroke="#666" strokeWidth="2" /></Svg></Slot>
          <SliderTrack><SliderKnob /></SliderTrack>
          <Slot $w={8} $h={21} $ml={5}><Svg w={8} h={8}><path d="M4 0v8M0 4h8" stroke="#666" strokeWidth="2" /></Svg></Slot>
          <Percent>100%</Percent>
        </StatusBar>

        <Menu>
          <MenuItem $h={25} $on>
            <MenuIcon><DeleteCellsIcon faded /></MenuIcon>
            <span><u>D</u>elete Cells...</span>
          </MenuItem>
          <MenuSep />
          <MenuItem $h={24}>
            <MenuIcon><DeleteRowsIcon /></MenuIcon>
            <span>Delete Sheet <u>R</u>ows</span>
          </MenuItem>
          <MenuItem $h={24}>
            <MenuIcon><DeleteColsIcon /></MenuIcon>
            <span>Delete Sheet <u>C</u>olumns</span>
          </MenuItem>
          <MenuSep />
          <MenuItem $h={26}>
            <MenuIcon><DeleteSheetIcon /></MenuIcon>
            <span>Delete <u>S</u>heet</span>
          </MenuItem>
        </Menu>
        <Arrow width="60" height="24" viewBox="0 0 60 24">
          <path d="M5 17.500 46 11" stroke="rgba(0,0,0,.25)" strokeWidth="5" transform="translate(1 1.500)" />
          <path d="M6 16 46 10" stroke="#e0433a" strokeWidth="5" strokeLinecap="round" />
          <path d="M44 3 57 7 46 17z" fill="#e0433a" />
        </Arrow>
      </Window>
    </>
  );
}
